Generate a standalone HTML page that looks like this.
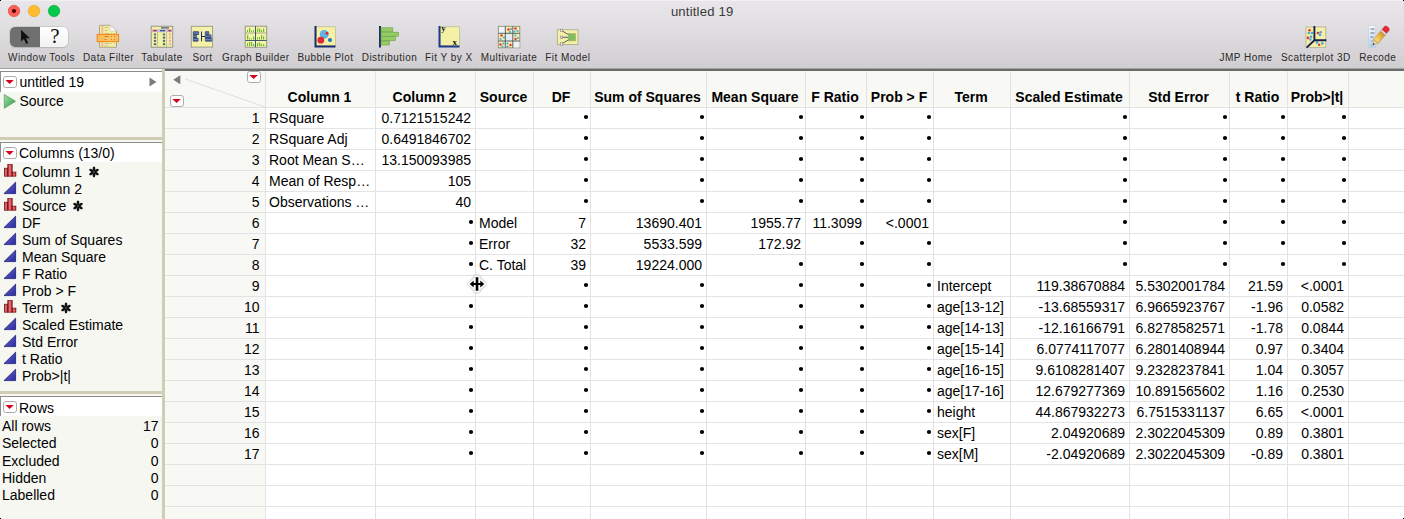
<!DOCTYPE html><html><head><meta charset="utf-8"><style>
html,body{margin:0;padding:0;}
body{width:1404px;height:519px;overflow:hidden;position:relative;background:#fff;font-family:"Liberation Sans",sans-serif;}
.t{position:absolute;white-space:nowrap;}
.r{position:absolute;}
</style></head><body>
<div class="r" style="left:0px;top:0px;width:1404px;height:69px;background:linear-gradient(#e8e6e8 0px,#e3e1e3 20px,#d9d7d9 45px,#d0ced0 68px);"></div>
<div class="r" style="left:0px;top:0px;width:1404px;height:1px;background:#f2f0f2;"></div>
<div class="r" style="left:0px;top:68px;width:1404px;height:1px;background:#a4a3a4;"></div>
<svg class="r" style="left:7px;top:4px" width="14" height="14" viewBox="0 0 14 14"><circle cx="7" cy="7" r="5.75" fill="#fd5f57" stroke="#e0443e" stroke-width="0.6"/></svg>
<svg class="r" style="left:27px;top:4px" width="14" height="14" viewBox="0 0 14 14"><circle cx="7" cy="7" r="5.75" fill="#febc2e" stroke="#dea123" stroke-width="0.6"/></svg>
<svg class="r" style="left:47px;top:4px" width="14" height="14" viewBox="0 0 14 14"><circle cx="7" cy="7" r="5.75" fill="#02c94c" stroke="#13a53a" stroke-width="0.6"/></svg>
<svg class="r" style="left:10px;top:7px" width="8" height="8" viewBox="0 0 8 8"><circle cx="4" cy="4" r="2.1" fill="#4d0000"/></svg>
<div class="t" style="left:402.20000000000005px;width:600px;text-align:center;top:4.81px;font-size:13.1px;line-height:13.1px;font-weight:normal;color:#3a3a3a;letter-spacing:0.2px;">untitled 19</div>
<div class="t" style="left:-258.5px;width:600px;text-align:center;top:53.14px;font-size:10px;line-height:10px;font-weight:normal;color:#2a2a2a;letter-spacing:0.45px;">Window Tools</div>
<div class="t" style="left:-191.5px;width:600px;text-align:center;top:53.14px;font-size:10px;line-height:10px;font-weight:normal;color:#2a2a2a;letter-spacing:0.45px;">Data Filter</div>
<div class="t" style="left:-138.0px;width:600px;text-align:center;top:53.14px;font-size:10px;line-height:10px;font-weight:normal;color:#2a2a2a;letter-spacing:0.45px;">Tabulate</div>
<div class="t" style="left:-97.5px;width:600px;text-align:center;top:53.14px;font-size:10px;line-height:10px;font-weight:normal;color:#2a2a2a;letter-spacing:0.45px;">Sort</div>
<div class="t" style="left:-44.19999999999999px;width:600px;text-align:center;top:53.14px;font-size:10px;line-height:10px;font-weight:normal;color:#2a2a2a;letter-spacing:0.45px;">Graph Builder</div>
<div class="t" style="left:25.5px;width:600px;text-align:center;top:53.14px;font-size:10px;line-height:10px;font-weight:normal;color:#2a2a2a;letter-spacing:0.45px;">Bubble Plot</div>
<div class="t" style="left:89.5px;width:600px;text-align:center;top:53.14px;font-size:10px;line-height:10px;font-weight:normal;color:#2a2a2a;letter-spacing:0.45px;">Distribution</div>
<div class="t" style="left:148.8px;width:600px;text-align:center;top:53.14px;font-size:10px;line-height:10px;font-weight:normal;color:#2a2a2a;letter-spacing:0.45px;">Fit Y by X</div>
<div class="t" style="left:209.0px;width:600px;text-align:center;top:53.14px;font-size:10px;line-height:10px;font-weight:normal;color:#2a2a2a;letter-spacing:0.45px;">Multivariate</div>
<div class="t" style="left:267.79999999999995px;width:600px;text-align:center;top:53.14px;font-size:10px;line-height:10px;font-weight:normal;color:#2a2a2a;letter-spacing:0.45px;">Fit Model</div>
<div class="t" style="left:946.0px;width:600px;text-align:center;top:53.14px;font-size:10px;line-height:10px;font-weight:normal;color:#2a2a2a;letter-spacing:0.45px;">JMP Home</div>
<div class="t" style="left:1015.8px;width:600px;text-align:center;top:53.14px;font-size:10px;line-height:10px;font-weight:normal;color:#2a2a2a;letter-spacing:0.45px;">Scatterplot 3D</div>
<div class="t" style="left:1077.8px;width:600px;text-align:center;top:53.14px;font-size:10px;line-height:10px;font-weight:normal;color:#2a2a2a;letter-spacing:0.45px;">Recode</div>
<div class="r" style="left:10px;top:27px;width:58px;height:20px;border-radius:5px;background:linear-gradient(#ffffff,#f2f2f2);box-shadow:0 0 0 0.5px #b9b9b9, 0 0.5px 1px rgba(0,0,0,0.15);"></div>
<div class="r" style="left:10px;top:27px;width:30px;height:20px;border-radius:5px 0 0 5px;background:#6f6f6f;"></div>
<svg class="r" style="left:20px;top:29px" width="12" height="16" viewBox="0 0 12 16"><path d="M1 0.8 L1 12.6 L3.9 10 L6.2 14.9 L8.2 14 L6 9.3 L9.9 9.3 Z" fill="#111"/></svg>
<div class="t" style="left:-245px;width:600px;text-align:center;top:26.42px;font-size:21px;line-height:21px;font-weight:normal;color:#111;font-family:'Liberation Serif',serif;">?</div>
<svg class="r" style="left:96px;top:24px" width="24" height="25" viewBox="0 0 24 25">
<path d="M3.5 1.3 H14.3 L20.5 7 V23.3 H3.5 Z" fill="#f3eea4" stroke="#9d9a7a" stroke-width="0.8"/>
<path d="M14.3 1.3 L14.3 7 L20.5 7 Z" fill="#fff" stroke="#c4c4c0" stroke-width="0.6"/>
<rect x="5.3" y="1.7" width="2" height="21.2" fill="#f4b8a0"/>
<g stroke="#b8b48a" stroke-width="0.8"><path d="M8.5 3.5h4M8.5 6.5h3M8.5 9.5h4.5M15 9.5h1M18 9.5h1M8.5 19.5h5M15 19.5h1M18 19.5h1M8.5 22h3"/></g>
<rect x="1.2" y="10.4" width="21.4" height="7.2" fill="#ffb850" fill-opacity="0.8" stroke="#f08a18" stroke-width="1.1"/>
<g stroke="#b07030" stroke-width="0.8"><path d="M8.5 12.5h4M15 12.5h1M18 12.5h1M8.5 15.5h2M15 15.5h1M18 15.5h1"/></g>
</svg>
<svg class="r" style="left:150px;top:25px" width="24" height="23" viewBox="0 0 24 23">
<rect x="1.2" y="1.2" width="21.5" height="21" fill="#f3f0a6" stroke="#8e8e80" stroke-width="0.9"/>
<rect x="1.6" y="4.2" width="20.8" height="3" fill="#f2a6a8"/>
<rect x="8.2" y="4.2" width="8.6" height="3" fill="#b8c8e4"/>
<rect x="11" y="2.2" width="8" height="1.3" fill="#4a5e88"/>
<rect x="3.5" y="5.1" width="3" height="1.2" fill="#3a4a80"/><rect x="10" y="5.1" width="5" height="1.2" fill="#3a4a80"/><rect x="18.5" y="5.1" width="2.5" height="1.2" fill="#3a4a80"/>
<path d="M7.5 7.3V22M16.5 7.3V22" stroke="#b8b496" stroke-width="0.9"/>
<g fill="#4a7078"><rect x="3.8" y="8.4" width="2.4" height="2.2" rx="0.8"/><rect x="3.8" y="11.6" width="2.4" height="2.2" rx="0.8"/><rect x="3.8" y="14.8" width="2.4" height="2.2" rx="0.8"/><rect x="3.8" y="18" width="2.4" height="2.2" rx="0.8"/>
<rect x="12.8" y="8.4" width="2.4" height="2.2" rx="0.8"/><rect x="12.8" y="11.6" width="2.4" height="2.2" rx="0.8"/><rect x="12.8" y="14.8" width="2.4" height="2.2" rx="0.8"/><rect x="12.8" y="18" width="2.4" height="2.2" rx="0.8"/></g>
<g fill="#f4a8ac"><rect x="18.8" y="8.4" width="2.2" height="2.2" rx="0.8"/><rect x="18.8" y="11.6" width="2.2" height="2.2" rx="0.8"/><rect x="18.8" y="14.8" width="2.2" height="2.2" rx="0.8"/><rect x="18.8" y="18" width="2.2" height="2.2" rx="0.8"/></g>
</svg>
<svg class="r" style="left:190px;top:25px" width="24" height="23" viewBox="0 0 24 23">
<defs><linearGradient id="sg" x1="0" y1="0" x2="0" y2="1"><stop offset="0" stop-color="#34508e"/><stop offset="0.5" stop-color="#6f88c0"/><stop offset="1" stop-color="#22366c"/></linearGradient></defs>
<rect x="1.3" y="1.3" width="21.3" height="20.8" fill="#f4f0a8" stroke="#9a9880" stroke-width="0.9"/>
<g fill="url(#sg)" stroke="#26386c" stroke-width="0.5">
<rect x="3.1" y="6.6" width="5.6" height="3.1" rx="0.6"/><rect x="3.1" y="9.8" width="3.4" height="3.1" rx="0.6"/><rect x="3.1" y="13" width="5.1" height="3.3" rx="0.6"/>
<rect x="15.2" y="6.6" width="3.7" height="3.1" rx="0.6"/><rect x="15.2" y="9.8" width="6" height="3.1" rx="0.6"/><rect x="15.2" y="13" width="6.6" height="3.3" rx="0.6"/></g>
<path d="M11.5 6.6V16.3M11.5 11.5H15.2" stroke="#1e2c56" stroke-width="1"/>
</svg>
<svg class="r" style="left:244px;top:25px" width="24" height="23" viewBox="0 0 24 23">
<rect x="1.2" y="1.2" width="21.5" height="21" fill="#f4f4a4" stroke="#8e9080" stroke-width="0.9"/>
<g fill="#6cb840">
<rect x="3" y="5" width="1" height="2"/><rect x="5" y="3" width="1.2" height="4"/><rect x="7" y="5.5" width="1" height="1.5"/><rect x="9" y="5" width="1" height="2"/>
<rect x="13" y="3.5" width="1.2" height="3.5"/><rect x="15" y="3.5" width="1.2" height="3.5"/><rect x="17" y="5" width="1" height="2"/><rect x="19" y="3.5" width="1.2" height="3.5"/>
<rect x="3" y="10" width="1.2" height="4.5"/><rect x="5" y="13" width="1" height="1.5"/><rect x="7" y="13.5" width="1" height="1"/><rect x="9" y="11.5" width="1.2" height="3"/>
<rect x="13" y="12.5" width="1" height="2"/><rect x="15" y="12" width="1" height="2.5"/><rect x="17" y="10" width="1.2" height="4.5"/><rect x="19" y="11.5" width="1.2" height="3"/>
<rect x="3" y="18" width="1" height="3"/><rect x="5" y="17" width="1.2" height="4"/><rect x="7" y="17" width="1.2" height="4"/><rect x="9" y="19" width="1.2" height="2"/>
<rect x="13" y="18" width="1.2" height="3"/><rect x="15" y="17.5" width="1.2" height="3.5"/><rect x="17" y="19" width="1" height="2"/><rect x="19" y="19" width="1.2" height="2"/></g>
<path d="M1.5 8H22.5" stroke="#9aa08a" stroke-width="0.9"/>
<path d="M1.5 15.5H22.5M11.5 1.2V22.2" stroke="#2e4a6a" stroke-width="0.9"/>
</svg>
<svg class="r" style="left:313px;top:25px" width="24" height="24" viewBox="0 0 24 24">
<rect x="3" y="1.8" width="19.5" height="19" fill="#f4f0a6" stroke="#b0ae90" stroke-width="0.6"/>
<path d="M2.5 1V21.5H22.5" fill="none" stroke="#1e2e6a" stroke-width="2"/>
<circle cx="11.2" cy="9.4" r="4.4" fill="#62b2e6"/>
<circle cx="14" cy="8.2" r="1.5" fill="#dd2a34"/>
<circle cx="7.8" cy="15.2" r="3.4" fill="#dd2a34"/>
<circle cx="17" cy="15" r="2.1" fill="#1e78c8"/>
</svg>
<svg class="r" style="left:378px;top:25px" width="24" height="24" viewBox="0 0 24 24">
<path d="M2 1V22.5" stroke="#1e2e6a" stroke-width="2"/>
<g fill="#92cc62" stroke="#6e9e48" stroke-width="0.6">
<rect x="3" y="2.8" width="11.8" height="4"/><rect x="3" y="7.2" width="17.5" height="4"/><rect x="3" y="11.6" width="14.3" height="4"/><rect x="3" y="16" width="8.5" height="4"/></g>
</svg>
<svg class="r" style="left:437px;top:25px" width="24" height="24" viewBox="0 0 24 24">
<rect x="3" y="1.8" width="19.5" height="19" fill="#f4f0a6" stroke="#b0ae90" stroke-width="0.6"/>
<path d="M2.5 1V21.5H22.5" fill="none" stroke="#1e3a8a" stroke-width="2"/>
<text x="4.3" y="6.3" font-family="Liberation Serif" font-weight="bold" font-size="9" fill="#111">y</text>
<text x="15.6" y="19.6" font-family="Liberation Serif" font-weight="bold" font-size="9" fill="#111">x</text>
</svg>
<svg class="r" style="left:497px;top:25px" width="24" height="24" viewBox="0 0 24 24">
<rect x="1.3" y="1.3" width="21.5" height="21.5" fill="#f4f0a6" stroke="#8e9080" stroke-width="0.9"/>
<rect x="2" y="2" width="6" height="6" fill="#f2f4fc"/><rect x="9" y="9.5" width="6.5" height="6.5" fill="#e4eaf8"/><rect x="16.5" y="16.5" width="6" height="6" fill="#eef0fa"/>
<path d="M8.3 1.3V22.8M15.8 1.3V22.8M1.3 8.3H22.8M1.3 16H22.8" stroke="#3e5670" stroke-width="0.9"/>
<g fill="#e0343c"><circle cx="11.5" cy="4.5" r="1.2"/><circle cx="18.5" cy="3.5" r="1.2"/><circle cx="4.5" cy="10.5" r="1.2"/><circle cx="18.5" cy="14" r="1.2"/><circle cx="3.5" cy="19.5" r="1.2"/><circle cx="13.5" cy="20" r="1.2"/></g>
<g fill="#4ea6e0"><circle cx="14" cy="4" r="1.1"/><circle cx="13" cy="7" r="1.1"/><circle cx="17.5" cy="6.5" r="1.1"/><circle cx="20.5" cy="6" r="1.1"/><circle cx="3.5" cy="14" r="1.1"/><circle cx="7" cy="12.5" r="1.1"/><circle cx="18.5" cy="10.5" r="1.1"/><circle cx="21" cy="13" r="1.1"/><circle cx="6.5" cy="18.5" r="1.1"/><circle cx="5.5" cy="21.5" r="1.1"/><circle cx="10.5" cy="18.5" r="1.1"/><circle cx="10.5" cy="21.5" r="1.1"/></g>
</svg>
<svg class="r" style="left:556px;top:28px" width="24" height="19" viewBox="0 0 24 19">
<rect x="1.3" y="1.8" width="20.7" height="14.8" fill="#f4f0a6" stroke="#a8a690" stroke-width="0.8"/>
<path d="M5.5 2.5L13 7M5.5 9.3H13M5.5 16L13 11.5" stroke="#34506a" stroke-width="0.9"/>
<rect x="12.7" y="5.6" width="6.8" height="7.3" fill="#7cc060" stroke="#b89a60" stroke-width="0.5"/>
<g fill="#f0f0ff" stroke="#9a8060" stroke-width="0.6"><rect x="4.3" y="1.2" width="2.4" height="2.4"/><rect x="4.3" y="8.1" width="2.4" height="2.4"/><rect x="4.3" y="14.8" width="2.4" height="2.4"/></g>
</svg>
<svg class="r" style="left:1305px;top:25px" width="24" height="24" viewBox="0 0 24 24">
<rect x="1" y="2" width="19.8" height="20.3" fill="#f4f0a6" stroke="#a8a690" stroke-width="0.7"/>
<g fill="#e0343c"><circle cx="4.5" cy="5.2" r="1.3"/><circle cx="3" cy="12.9" r="1.3"/><circle cx="13" cy="8" r="1.3"/><circle cx="14.1" cy="19.8" r="1.3"/></g>
<g fill="#4ea6e0"><circle cx="3.9" cy="8" r="1.3"/><circle cx="7" cy="8" r="1.3"/><circle cx="6" cy="11.7" r="1.3"/><circle cx="5.3" cy="14.5" r="1.3"/><circle cx="15.7" cy="7.2" r="1.3"/><circle cx="15" cy="10" r="1.3"/><circle cx="12" cy="17.4" r="1.3"/><circle cx="17.4" cy="18.4" r="1.3"/></g>
<path d="M9.4 1V15.2H21.4M9.4 15.2L1.6 22.6" fill="none" stroke="#16244e" stroke-width="1.9"/>
</svg>
<svg class="r" style="left:1366px;top:24px" width="25" height="25" viewBox="0 0 25 25">
<defs><linearGradient id="rg" x1="0" y1="0" x2="0" y2="1"><stop offset="0" stop-color="#f4f8fc"/><stop offset="1" stop-color="#b4d4f2"/></linearGradient>
<linearGradient id="pg" x1="0" y1="1" x2="1" y2="0"><stop offset="0" stop-color="#fde890"/><stop offset="0.5" stop-color="#eebc48"/><stop offset="1" stop-color="#b08020"/></linearGradient></defs>
<rect x="2.3" y="1.5" width="7.5" height="22" fill="url(#rg)" stroke="#c4ccd4" stroke-width="0.6"/>
<g stroke="#5a6570" stroke-width="0.9"><path d="M4.5 5h4M4.5 9h4M4.5 13h3"/></g>
<g stroke="#8a95a0" stroke-width="0.8"><path d="M4.5 17h3M4.5 21h3"/></g>
<path d="M7 20.8 L12.2 19.3 L7.6 15.4 Z" fill="#ecd4a4" stroke="#b09060" stroke-width="0.4"/>
<path d="M7 20.8 L8.9 20.2 L7.3 18.8 Z" fill="#222"/>
<path d="M7.6 15.4 L12.2 19.3 L19.3 10.9 L14.7 7 Z" fill="url(#pg)" stroke="#a87a20" stroke-width="0.5"/>
<path d="M14.7 7 L19.3 10.9 L20.6 9.35 L16 5.5 Z" fill="#dcdcdc" stroke="#909090" stroke-width="0.4"/>
<path d="M16 5.5 L20.6 9.35 L23 6.5 Q24 5.2 22.6 3.8 L20.8 2.3 Q19.4 1.4 18.4 2.6 Z" fill="#e42838" stroke="#b81828" stroke-width="0.4"/>
</svg>
<div class="r" style="left:0px;top:69px;width:162px;height:450px;background:#f7f7f2;"></div>
<div class="r" style="left:162px;top:69px;width:3px;height:450px;background:#cfcdb6;"></div>
<div class="r" style="left:0px;top:69px;width:162px;height:2px;background:#fbfbf9;"></div>
<div class="r" style="left:0px;top:71px;width:162px;height:21px;background:#fff;"></div>
<div class="r" style="left:0px;top:71px;width:162px;height:1px;background:#8c8c8c;"></div>
<div class="r" style="left:0px;top:71px;width:1px;height:21px;background:#8c8c8c;"></div>
<svg class="r" style="left:2px;top:75px" width="16" height="14" viewBox="0 0 16 14"><rect x="1.5" y="1.5" width="13" height="11" rx="2.3" fill="#fff" stroke="#acacac" stroke-width="1"/><path d="M3.4 5 H11.8 L7.6 9.1 Z" fill="#d6001a"/></svg>
<div class="t" style="left:19.5px;top:74.95px;font-size:14px;line-height:14px;font-weight:normal;color:#000;">untitled 19</div>
<svg class="r" style="left:148px;top:76px" width="10" height="12" viewBox="0 0 10 12"><path d="M1.5 1.5 L8.5 6 L1.5 10.5 Z" fill="#7b7b7b"/></svg>
<svg class="r" style="left:3px;top:93px" width="14" height="17" viewBox="0 0 14 17"><defs><linearGradient id="gg" x1="0" y1="0" x2="1" y2="1"><stop offset="0" stop-color="#9ee0a8"/><stop offset="1" stop-color="#2f9a48"/></linearGradient></defs><path d="M1.3 1.5 L12.5 8.3 L1.3 15.3 Z" fill="url(#gg)" stroke="#3a8a4a" stroke-width="0.6"/></svg>
<div class="t" style="left:19.5px;top:94.15px;font-size:14px;line-height:14px;font-weight:normal;color:#000;">Source</div>
<div class="r" style="left:0px;top:137px;width:162px;height:3px;background:#cfcdb6;"></div>
<div class="r" style="left:0px;top:142px;width:162px;height:20px;background:#fff;"></div>
<div class="r" style="left:0px;top:142px;width:162px;height:1px;background:#8c8c8c;"></div>
<div class="r" style="left:0px;top:142px;width:1px;height:20px;background:#8c8c8c;"></div>
<svg class="r" style="left:2px;top:146px" width="16" height="14" viewBox="0 0 16 14"><rect x="1.5" y="1.5" width="13" height="11" rx="2.3" fill="#fff" stroke="#acacac" stroke-width="1"/><path d="M3.4 5 H11.8 L7.6 9.1 Z" fill="#d6001a"/></svg>
<div class="t" style="left:19px;top:146.15px;font-size:14px;line-height:14px;font-weight:normal;color:#000;">Columns (13/0)</div>
<svg class="r" style="left:3px;top:164.3px" width="14" height="14" viewBox="0 0 14 14"><defs><linearGradient id="ng" x1="0" y1="0" x2="1" y2="0"><stop offset="0" stop-color="#9a1018"/><stop offset="0.45" stop-color="#e8868a"/><stop offset="1" stop-color="#a8141c"/></linearGradient></defs><g stroke="#7a0a10" stroke-width="0.7" fill="url(#ng)"><rect x="1.4" y="4.2" width="3.4" height="8"/><rect x="4.8" y="0.6" width="4.4" height="11.6"/><rect x="9.2" y="8.1" width="3.7" height="4.1"/></g></svg>
<div class="t" style="left:22px;top:164.95px;font-size:14px;line-height:14px;font-weight:normal;color:#000;">Column 1</div>
<svg class="r" style="left:87.9px;top:165.60000000000002px" width="12" height="12" viewBox="0 0 12 12"><g transform="translate(6,6)" fill="#111"><circle r="1"/><ellipse cx="0" cy="-3.1" rx="1.35" ry="2.3" transform="rotate(0)"/><ellipse cx="0" cy="-3.1" rx="1.35" ry="2.3" transform="rotate(60)"/><ellipse cx="0" cy="-3.1" rx="1.35" ry="2.3" transform="rotate(120)"/><ellipse cx="0" cy="-3.1" rx="1.35" ry="2.3" transform="rotate(180)"/><ellipse cx="0" cy="-3.1" rx="1.35" ry="2.3" transform="rotate(240)"/><ellipse cx="0" cy="-3.1" rx="1.35" ry="2.3" transform="rotate(300)"/></g></svg>
<svg class="r" style="left:3px;top:181.3px" width="14" height="14" viewBox="0 0 14 14"><defs><linearGradient id="cg" x1="0" y1="0" x2="1" y2="1"><stop offset="0" stop-color="#6a6ad8"/><stop offset="1" stop-color="#2a2a9a"/></linearGradient></defs><path d="M1 12.6 L12.6 1.2 V12.6 Z" fill="url(#cg)" stroke="#1e1e78" stroke-width="0.8"/></svg>
<div class="t" style="left:22px;top:181.95px;font-size:14px;line-height:14px;font-weight:normal;color:#000;">Column 2</div>
<svg class="r" style="left:3px;top:198.3px" width="14" height="14" viewBox="0 0 14 14"><defs><linearGradient id="ng" x1="0" y1="0" x2="1" y2="0"><stop offset="0" stop-color="#9a1018"/><stop offset="0.45" stop-color="#e8868a"/><stop offset="1" stop-color="#a8141c"/></linearGradient></defs><g stroke="#7a0a10" stroke-width="0.7" fill="url(#ng)"><rect x="1.4" y="4.2" width="3.4" height="8"/><rect x="4.8" y="0.6" width="4.4" height="11.6"/><rect x="9.2" y="8.1" width="3.7" height="4.1"/></g></svg>
<div class="t" style="left:22px;top:198.95px;font-size:14px;line-height:14px;font-weight:normal;color:#000;">Source</div>
<svg class="r" style="left:72.4px;top:199.60000000000002px" width="12" height="12" viewBox="0 0 12 12"><g transform="translate(6,6)" fill="#111"><circle r="1"/><ellipse cx="0" cy="-3.1" rx="1.35" ry="2.3" transform="rotate(0)"/><ellipse cx="0" cy="-3.1" rx="1.35" ry="2.3" transform="rotate(60)"/><ellipse cx="0" cy="-3.1" rx="1.35" ry="2.3" transform="rotate(120)"/><ellipse cx="0" cy="-3.1" rx="1.35" ry="2.3" transform="rotate(180)"/><ellipse cx="0" cy="-3.1" rx="1.35" ry="2.3" transform="rotate(240)"/><ellipse cx="0" cy="-3.1" rx="1.35" ry="2.3" transform="rotate(300)"/></g></svg>
<svg class="r" style="left:3px;top:215.3px" width="14" height="14" viewBox="0 0 14 14"><defs><linearGradient id="cg" x1="0" y1="0" x2="1" y2="1"><stop offset="0" stop-color="#6a6ad8"/><stop offset="1" stop-color="#2a2a9a"/></linearGradient></defs><path d="M1 12.6 L12.6 1.2 V12.6 Z" fill="url(#cg)" stroke="#1e1e78" stroke-width="0.8"/></svg>
<div class="t" style="left:22px;top:215.95px;font-size:14px;line-height:14px;font-weight:normal;color:#000;">DF</div>
<svg class="r" style="left:3px;top:232.3px" width="14" height="14" viewBox="0 0 14 14"><defs><linearGradient id="cg" x1="0" y1="0" x2="1" y2="1"><stop offset="0" stop-color="#6a6ad8"/><stop offset="1" stop-color="#2a2a9a"/></linearGradient></defs><path d="M1 12.6 L12.6 1.2 V12.6 Z" fill="url(#cg)" stroke="#1e1e78" stroke-width="0.8"/></svg>
<div class="t" style="left:22px;top:232.95px;font-size:14px;line-height:14px;font-weight:normal;color:#000;">Sum of Squares</div>
<svg class="r" style="left:3px;top:249.3px" width="14" height="14" viewBox="0 0 14 14"><defs><linearGradient id="cg" x1="0" y1="0" x2="1" y2="1"><stop offset="0" stop-color="#6a6ad8"/><stop offset="1" stop-color="#2a2a9a"/></linearGradient></defs><path d="M1 12.6 L12.6 1.2 V12.6 Z" fill="url(#cg)" stroke="#1e1e78" stroke-width="0.8"/></svg>
<div class="t" style="left:22px;top:249.95px;font-size:14px;line-height:14px;font-weight:normal;color:#000;">Mean Square</div>
<svg class="r" style="left:3px;top:266.3px" width="14" height="14" viewBox="0 0 14 14"><defs><linearGradient id="cg" x1="0" y1="0" x2="1" y2="1"><stop offset="0" stop-color="#6a6ad8"/><stop offset="1" stop-color="#2a2a9a"/></linearGradient></defs><path d="M1 12.6 L12.6 1.2 V12.6 Z" fill="url(#cg)" stroke="#1e1e78" stroke-width="0.8"/></svg>
<div class="t" style="left:22px;top:266.95px;font-size:14px;line-height:14px;font-weight:normal;color:#000;">F Ratio</div>
<svg class="r" style="left:3px;top:283.3px" width="14" height="14" viewBox="0 0 14 14"><defs><linearGradient id="cg" x1="0" y1="0" x2="1" y2="1"><stop offset="0" stop-color="#6a6ad8"/><stop offset="1" stop-color="#2a2a9a"/></linearGradient></defs><path d="M1 12.6 L12.6 1.2 V12.6 Z" fill="url(#cg)" stroke="#1e1e78" stroke-width="0.8"/></svg>
<div class="t" style="left:22px;top:283.95px;font-size:14px;line-height:14px;font-weight:normal;color:#000;">Prob &gt; F</div>
<svg class="r" style="left:3px;top:300.3px" width="14" height="14" viewBox="0 0 14 14"><defs><linearGradient id="ng" x1="0" y1="0" x2="1" y2="0"><stop offset="0" stop-color="#9a1018"/><stop offset="0.45" stop-color="#e8868a"/><stop offset="1" stop-color="#a8141c"/></linearGradient></defs><g stroke="#7a0a10" stroke-width="0.7" fill="url(#ng)"><rect x="1.4" y="4.2" width="3.4" height="8"/><rect x="4.8" y="0.6" width="4.4" height="11.6"/><rect x="9.2" y="8.1" width="3.7" height="4.1"/></g></svg>
<div class="t" style="left:22px;top:300.95px;font-size:14px;line-height:14px;font-weight:normal;color:#000;">Term</div>
<svg class="r" style="left:59.900000000000006px;top:301.6px" width="12" height="12" viewBox="0 0 12 12"><g transform="translate(6,6)" fill="#111"><circle r="1"/><ellipse cx="0" cy="-3.1" rx="1.35" ry="2.3" transform="rotate(0)"/><ellipse cx="0" cy="-3.1" rx="1.35" ry="2.3" transform="rotate(60)"/><ellipse cx="0" cy="-3.1" rx="1.35" ry="2.3" transform="rotate(120)"/><ellipse cx="0" cy="-3.1" rx="1.35" ry="2.3" transform="rotate(180)"/><ellipse cx="0" cy="-3.1" rx="1.35" ry="2.3" transform="rotate(240)"/><ellipse cx="0" cy="-3.1" rx="1.35" ry="2.3" transform="rotate(300)"/></g></svg>
<svg class="r" style="left:3px;top:317.3px" width="14" height="14" viewBox="0 0 14 14"><defs><linearGradient id="cg" x1="0" y1="0" x2="1" y2="1"><stop offset="0" stop-color="#6a6ad8"/><stop offset="1" stop-color="#2a2a9a"/></linearGradient></defs><path d="M1 12.6 L12.6 1.2 V12.6 Z" fill="url(#cg)" stroke="#1e1e78" stroke-width="0.8"/></svg>
<div class="t" style="left:22px;top:317.95px;font-size:14px;line-height:14px;font-weight:normal;color:#000;">Scaled Estimate</div>
<svg class="r" style="left:3px;top:334.3px" width="14" height="14" viewBox="0 0 14 14"><defs><linearGradient id="cg" x1="0" y1="0" x2="1" y2="1"><stop offset="0" stop-color="#6a6ad8"/><stop offset="1" stop-color="#2a2a9a"/></linearGradient></defs><path d="M1 12.6 L12.6 1.2 V12.6 Z" fill="url(#cg)" stroke="#1e1e78" stroke-width="0.8"/></svg>
<div class="t" style="left:22px;top:334.95px;font-size:14px;line-height:14px;font-weight:normal;color:#000;">Std Error</div>
<svg class="r" style="left:3px;top:351.3px" width="14" height="14" viewBox="0 0 14 14"><defs><linearGradient id="cg" x1="0" y1="0" x2="1" y2="1"><stop offset="0" stop-color="#6a6ad8"/><stop offset="1" stop-color="#2a2a9a"/></linearGradient></defs><path d="M1 12.6 L12.6 1.2 V12.6 Z" fill="url(#cg)" stroke="#1e1e78" stroke-width="0.8"/></svg>
<div class="t" style="left:22px;top:351.95px;font-size:14px;line-height:14px;font-weight:normal;color:#000;">t Ratio</div>
<svg class="r" style="left:3px;top:368.3px" width="14" height="14" viewBox="0 0 14 14"><defs><linearGradient id="cg" x1="0" y1="0" x2="1" y2="1"><stop offset="0" stop-color="#6a6ad8"/><stop offset="1" stop-color="#2a2a9a"/></linearGradient></defs><path d="M1 12.6 L12.6 1.2 V12.6 Z" fill="url(#cg)" stroke="#1e1e78" stroke-width="0.8"/></svg>
<div class="t" style="left:22px;top:368.95px;font-size:14px;line-height:14px;font-weight:normal;color:#000;">Prob&gt;|t|</div>
<div class="r" style="left:0px;top:391px;width:162px;height:3px;background:#cfcdb6;"></div>
<div class="r" style="left:0px;top:396px;width:162px;height:20px;background:#fff;"></div>
<div class="r" style="left:0px;top:396px;width:162px;height:1px;background:#8c8c8c;"></div>
<div class="r" style="left:0px;top:396px;width:1px;height:20px;background:#8c8c8c;"></div>
<svg class="r" style="left:2px;top:400px" width="16" height="14" viewBox="0 0 16 14"><rect x="1.5" y="1.5" width="13" height="11" rx="2.3" fill="#fff" stroke="#acacac" stroke-width="1"/><path d="M3.4 5 H11.8 L7.6 9.1 Z" fill="#d6001a"/></svg>
<div class="t" style="left:19px;top:400.75px;font-size:14px;line-height:14px;font-weight:normal;color:#000;">Rows</div>
<div class="t" style="left:2px;top:419.35px;font-size:14px;line-height:14px;font-weight:normal;color:#000;">All rows</div>
<div class="t" style="left:-441.5px;width:600px;text-align:right;top:419.35px;font-size:14px;line-height:14px;font-weight:normal;color:#000;">17</div>
<div class="t" style="left:2px;top:436.43px;font-size:14px;line-height:14px;font-weight:normal;color:#000;">Selected</div>
<div class="t" style="left:-441.5px;width:600px;text-align:right;top:436.43px;font-size:14px;line-height:14px;font-weight:normal;color:#000;">0</div>
<div class="t" style="left:2px;top:453.51px;font-size:14px;line-height:14px;font-weight:normal;color:#000;">Excluded</div>
<div class="t" style="left:-441.5px;width:600px;text-align:right;top:453.51px;font-size:14px;line-height:14px;font-weight:normal;color:#000;">0</div>
<div class="t" style="left:2px;top:470.59px;font-size:14px;line-height:14px;font-weight:normal;color:#000;">Hidden</div>
<div class="t" style="left:-441.5px;width:600px;text-align:right;top:470.59px;font-size:14px;line-height:14px;font-weight:normal;color:#000;">0</div>
<div class="t" style="left:2px;top:487.67px;font-size:14px;line-height:14px;font-weight:normal;color:#000;">Labelled</div>
<div class="t" style="left:-441.5px;width:600px;text-align:right;top:487.67px;font-size:14px;line-height:14px;font-weight:normal;color:#000;">0</div>
<div class="r" style="left:165px;top:69px;width:1239px;height:2px;background:#6b6b6b;"></div>
<div class="r" style="left:165px;top:71px;width:1239px;height:448px;background:#fff;"></div>
<div class="r" style="left:165px;top:71px;width:1239px;height:36px;background:#f8f8f4;"></div>
<div class="r" style="left:165px;top:71px;width:100px;height:448px;background:#f8f8f4;"></div>
<div class="r" style="left:165px;top:107px;width:1239px;height:1px;background:#e3e3e3;"></div>
<div class="r" style="left:165px;top:128px;width:1239px;height:1px;background:#e3e3e3;"></div>
<div class="r" style="left:165px;top:149px;width:1239px;height:1px;background:#e3e3e3;"></div>
<div class="r" style="left:165px;top:170px;width:1239px;height:1px;background:#e3e3e3;"></div>
<div class="r" style="left:165px;top:191px;width:1239px;height:1px;background:#e3e3e3;"></div>
<div class="r" style="left:165px;top:212px;width:1239px;height:1px;background:#e3e3e3;"></div>
<div class="r" style="left:165px;top:233px;width:1239px;height:1px;background:#e3e3e3;"></div>
<div class="r" style="left:165px;top:254px;width:1239px;height:1px;background:#e3e3e3;"></div>
<div class="r" style="left:165px;top:275px;width:1239px;height:1px;background:#e3e3e3;"></div>
<div class="r" style="left:165px;top:296px;width:1239px;height:1px;background:#e3e3e3;"></div>
<div class="r" style="left:165px;top:317px;width:1239px;height:1px;background:#e3e3e3;"></div>
<div class="r" style="left:165px;top:338px;width:1239px;height:1px;background:#e3e3e3;"></div>
<div class="r" style="left:165px;top:359px;width:1239px;height:1px;background:#e3e3e3;"></div>
<div class="r" style="left:165px;top:380px;width:1239px;height:1px;background:#e3e3e3;"></div>
<div class="r" style="left:165px;top:401px;width:1239px;height:1px;background:#e3e3e3;"></div>
<div class="r" style="left:165px;top:422px;width:1239px;height:1px;background:#e3e3e3;"></div>
<div class="r" style="left:165px;top:443px;width:1239px;height:1px;background:#e3e3e3;"></div>
<div class="r" style="left:165px;top:464px;width:1239px;height:1px;background:#e3e3e3;"></div>
<div class="r" style="left:165px;top:485px;width:1239px;height:1px;background:#e3e3e3;"></div>
<div class="r" style="left:165px;top:506px;width:1239px;height:1px;background:#e3e3e3;"></div>
<div class="r" style="left:265px;top:71px;width:1px;height:448px;background:#e3e3e3;"></div>
<div class="r" style="left:375px;top:71px;width:1px;height:448px;background:#e3e3e3;"></div>
<div class="r" style="left:475px;top:71px;width:1px;height:448px;background:#e3e3e3;"></div>
<div class="r" style="left:533px;top:71px;width:1px;height:448px;background:#e3e3e3;"></div>
<div class="r" style="left:590px;top:71px;width:1px;height:448px;background:#e3e3e3;"></div>
<div class="r" style="left:706px;top:71px;width:1px;height:448px;background:#e3e3e3;"></div>
<div class="r" style="left:805px;top:71px;width:1px;height:448px;background:#e3e3e3;"></div>
<div class="r" style="left:866px;top:71px;width:1px;height:448px;background:#e3e3e3;"></div>
<div class="r" style="left:933px;top:71px;width:1px;height:448px;background:#e3e3e3;"></div>
<div class="r" style="left:1010px;top:71px;width:1px;height:448px;background:#e3e3e3;"></div>
<div class="r" style="left:1129px;top:71px;width:1px;height:448px;background:#e3e3e3;"></div>
<div class="r" style="left:1229px;top:71px;width:1px;height:448px;background:#e3e3e3;"></div>
<div class="r" style="left:1287px;top:71px;width:1px;height:448px;background:#e3e3e3;"></div>
<div class="r" style="left:1348px;top:71px;width:1px;height:448px;background:#e3e3e3;"></div>
<svg class="r" style="left:172px;top:74px" width="10" height="12" viewBox="0 0 10 12"><path d="M8.3 1.2 V10.3 L1.2 5.75 Z" fill="#7b7b7b"/></svg>
<svg class="r" style="left:165px;top:71px" width="101" height="37"><line x1="20" y1="8" x2="100" y2="36" stroke="#d8d8d8" stroke-width="0.8"/></svg>
<svg class="r" style="left:246px;top:70px" width="16" height="14" viewBox="0 0 16 14"><rect x="1.5" y="1.5" width="13" height="11" rx="2.3" fill="#fff" stroke="#acacac" stroke-width="1"/><path d="M3.4 5 H11.8 L7.6 9.1 Z" fill="#d6001a"/></svg>
<svg class="r" style="left:169px;top:94px" width="16" height="14" viewBox="0 0 16 14"><rect x="1.5" y="1.5" width="13" height="11" rx="2.3" fill="#fff" stroke="#acacac" stroke-width="1"/><path d="M3.4 5 H11.8 L7.6 9.1 Z" fill="#d6001a"/></svg>
<div class="t" style="left:19.5px;width:600px;text-align:center;top:89.95px;font-size:14px;line-height:14px;font-weight:bold;color:#000;">Column 1</div>
<div class="t" style="left:124.5px;width:600px;text-align:center;top:89.95px;font-size:14px;line-height:14px;font-weight:bold;color:#000;">Column 2</div>
<div class="t" style="left:203.5px;width:600px;text-align:center;top:89.95px;font-size:14px;line-height:14px;font-weight:bold;color:#000;">Source</div>
<div class="t" style="left:261.0px;width:600px;text-align:center;top:89.95px;font-size:14px;line-height:14px;font-weight:bold;color:#000;">DF</div>
<div class="t" style="left:347.5px;width:600px;text-align:center;top:89.95px;font-size:14px;line-height:14px;font-weight:bold;color:#000;">Sum of Squares</div>
<div class="t" style="left:455.0px;width:600px;text-align:center;top:89.95px;font-size:14px;line-height:14px;font-weight:bold;color:#000;">Mean Square</div>
<div class="t" style="left:535.0px;width:600px;text-align:center;top:89.95px;font-size:14px;line-height:14px;font-weight:bold;color:#000;">F Ratio</div>
<div class="t" style="left:599.0px;width:600px;text-align:center;top:89.95px;font-size:14px;line-height:14px;font-weight:bold;color:#000;">Prob &gt; F</div>
<div class="t" style="left:671.0px;width:600px;text-align:center;top:89.95px;font-size:14px;line-height:14px;font-weight:bold;color:#000;">Term</div>
<div class="t" style="left:769.0px;width:600px;text-align:center;top:89.95px;font-size:14px;line-height:14px;font-weight:bold;color:#000;">Scaled Estimate</div>
<div class="t" style="left:878.5px;width:600px;text-align:center;top:89.95px;font-size:14px;line-height:14px;font-weight:bold;color:#000;">Std Error</div>
<div class="t" style="left:957.5px;width:600px;text-align:center;top:89.95px;font-size:14px;line-height:14px;font-weight:bold;color:#000;">t Ratio</div>
<div class="t" style="left:1017.0px;width:600px;text-align:center;top:89.95px;font-size:14px;line-height:14px;font-weight:bold;color:#000;">Prob&gt;|t|</div>
<div class="t" style="left:-340.5px;width:600px;text-align:right;top:111.05px;font-size:14px;line-height:14px;font-weight:normal;color:#000;">1</div>
<div class="t" style="left:269px;top:111.05px;font-size:14px;line-height:14px;font-weight:normal;color:#000;">RSquare</div>
<div class="t" style="left:-129px;width:600px;text-align:right;top:111.05px;font-size:14px;line-height:14px;font-weight:normal;color:#000;">0.7121515242</div>
<div class="t" style="left:-340.5px;width:600px;text-align:right;top:132.05px;font-size:14px;line-height:14px;font-weight:normal;color:#000;">2</div>
<div class="t" style="left:269px;top:132.05px;font-size:14px;line-height:14px;font-weight:normal;color:#000;">RSquare Adj</div>
<div class="t" style="left:-129px;width:600px;text-align:right;top:132.05px;font-size:14px;line-height:14px;font-weight:normal;color:#000;">0.6491846702</div>
<div class="t" style="left:-340.5px;width:600px;text-align:right;top:153.05px;font-size:14px;line-height:14px;font-weight:normal;color:#000;">3</div>
<div class="t" style="left:269px;top:153.05px;font-size:14px;line-height:14px;font-weight:normal;color:#000;">Root Mean S…</div>
<div class="t" style="left:-129px;width:600px;text-align:right;top:153.05px;font-size:14px;line-height:14px;font-weight:normal;color:#000;">13.150093985</div>
<div class="t" style="left:-340.5px;width:600px;text-align:right;top:174.05px;font-size:14px;line-height:14px;font-weight:normal;color:#000;">4</div>
<div class="t" style="left:269px;top:174.05px;font-size:14px;line-height:14px;font-weight:normal;color:#000;">Mean of Resp…</div>
<div class="t" style="left:-129px;width:600px;text-align:right;top:174.05px;font-size:14px;line-height:14px;font-weight:normal;color:#000;">105</div>
<div class="t" style="left:-340.5px;width:600px;text-align:right;top:195.05px;font-size:14px;line-height:14px;font-weight:normal;color:#000;">5</div>
<div class="t" style="left:269px;top:195.05px;font-size:14px;line-height:14px;font-weight:normal;color:#000;">Observations …</div>
<div class="t" style="left:-129px;width:600px;text-align:right;top:195.05px;font-size:14px;line-height:14px;font-weight:normal;color:#000;">40</div>
<div class="t" style="left:-340.5px;width:600px;text-align:right;top:216.05px;font-size:14px;line-height:14px;font-weight:normal;color:#000;">6</div>
<div class="t" style="left:479px;top:216.05px;font-size:14px;line-height:14px;font-weight:normal;color:#000;">Model</div>
<div class="t" style="left:-14px;width:600px;text-align:right;top:216.05px;font-size:14px;line-height:14px;font-weight:normal;color:#000;">7</div>
<div class="t" style="left:102px;width:600px;text-align:right;top:216.05px;font-size:14px;line-height:14px;font-weight:normal;color:#000;">13690.401</div>
<div class="t" style="left:201px;width:600px;text-align:right;top:216.05px;font-size:14px;line-height:14px;font-weight:normal;color:#000;">1955.77</div>
<div class="t" style="left:262px;width:600px;text-align:right;top:216.05px;font-size:14px;line-height:14px;font-weight:normal;color:#000;">11.3099</div>
<div class="t" style="left:329px;width:600px;text-align:right;top:216.05px;font-size:14px;line-height:14px;font-weight:normal;color:#000;">&lt;.0001</div>
<div class="t" style="left:-340.5px;width:600px;text-align:right;top:237.05px;font-size:14px;line-height:14px;font-weight:normal;color:#000;">7</div>
<div class="t" style="left:479px;top:237.05px;font-size:14px;line-height:14px;font-weight:normal;color:#000;">Error</div>
<div class="t" style="left:-14px;width:600px;text-align:right;top:237.05px;font-size:14px;line-height:14px;font-weight:normal;color:#000;">32</div>
<div class="t" style="left:102px;width:600px;text-align:right;top:237.05px;font-size:14px;line-height:14px;font-weight:normal;color:#000;">5533.599</div>
<div class="t" style="left:201px;width:600px;text-align:right;top:237.05px;font-size:14px;line-height:14px;font-weight:normal;color:#000;">172.92</div>
<div class="t" style="left:-340.5px;width:600px;text-align:right;top:258.05px;font-size:14px;line-height:14px;font-weight:normal;color:#000;">8</div>
<div class="t" style="left:479px;top:258.05px;font-size:14px;line-height:14px;font-weight:normal;color:#000;">C. Total</div>
<div class="t" style="left:-14px;width:600px;text-align:right;top:258.05px;font-size:14px;line-height:14px;font-weight:normal;color:#000;">39</div>
<div class="t" style="left:102px;width:600px;text-align:right;top:258.05px;font-size:14px;line-height:14px;font-weight:normal;color:#000;">19224.000</div>
<div class="t" style="left:-340.5px;width:600px;text-align:right;top:279.05px;font-size:14px;line-height:14px;font-weight:normal;color:#000;">9</div>
<div class="t" style="left:937px;top:279.05px;font-size:14px;line-height:14px;font-weight:normal;color:#000;">Intercept</div>
<div class="t" style="left:525px;width:600px;text-align:right;top:279.05px;font-size:14px;line-height:14px;font-weight:normal;color:#000;">119.38670884</div>
<div class="t" style="left:625px;width:600px;text-align:right;top:279.05px;font-size:14px;line-height:14px;font-weight:normal;color:#000;">5.5302001784</div>
<div class="t" style="left:683px;width:600px;text-align:right;top:279.05px;font-size:14px;line-height:14px;font-weight:normal;color:#000;">21.59</div>
<div class="t" style="left:744px;width:600px;text-align:right;top:279.05px;font-size:14px;line-height:14px;font-weight:normal;color:#000;">&lt;.0001</div>
<div class="t" style="left:-340.5px;width:600px;text-align:right;top:300.05px;font-size:14px;line-height:14px;font-weight:normal;color:#000;">10</div>
<div class="t" style="left:937px;top:300.05px;font-size:14px;line-height:14px;font-weight:normal;color:#000;">age[13-12]</div>
<div class="t" style="left:525px;width:600px;text-align:right;top:300.05px;font-size:14px;line-height:14px;font-weight:normal;color:#000;">-13.68559317</div>
<div class="t" style="left:625px;width:600px;text-align:right;top:300.05px;font-size:14px;line-height:14px;font-weight:normal;color:#000;">6.9665923767</div>
<div class="t" style="left:683px;width:600px;text-align:right;top:300.05px;font-size:14px;line-height:14px;font-weight:normal;color:#000;">-1.96</div>
<div class="t" style="left:744px;width:600px;text-align:right;top:300.05px;font-size:14px;line-height:14px;font-weight:normal;color:#000;">0.0582</div>
<div class="t" style="left:-340.5px;width:600px;text-align:right;top:321.05px;font-size:14px;line-height:14px;font-weight:normal;color:#000;">11</div>
<div class="t" style="left:937px;top:321.05px;font-size:14px;line-height:14px;font-weight:normal;color:#000;">age[14-13]</div>
<div class="t" style="left:525px;width:600px;text-align:right;top:321.05px;font-size:14px;line-height:14px;font-weight:normal;color:#000;">-12.16166791</div>
<div class="t" style="left:625px;width:600px;text-align:right;top:321.05px;font-size:14px;line-height:14px;font-weight:normal;color:#000;">6.8278582571</div>
<div class="t" style="left:683px;width:600px;text-align:right;top:321.05px;font-size:14px;line-height:14px;font-weight:normal;color:#000;">-1.78</div>
<div class="t" style="left:744px;width:600px;text-align:right;top:321.05px;font-size:14px;line-height:14px;font-weight:normal;color:#000;">0.0844</div>
<div class="t" style="left:-340.5px;width:600px;text-align:right;top:342.05px;font-size:14px;line-height:14px;font-weight:normal;color:#000;">12</div>
<div class="t" style="left:937px;top:342.05px;font-size:14px;line-height:14px;font-weight:normal;color:#000;">age[15-14]</div>
<div class="t" style="left:525px;width:600px;text-align:right;top:342.05px;font-size:14px;line-height:14px;font-weight:normal;color:#000;">6.0774117077</div>
<div class="t" style="left:625px;width:600px;text-align:right;top:342.05px;font-size:14px;line-height:14px;font-weight:normal;color:#000;">6.2801408944</div>
<div class="t" style="left:683px;width:600px;text-align:right;top:342.05px;font-size:14px;line-height:14px;font-weight:normal;color:#000;">0.97</div>
<div class="t" style="left:744px;width:600px;text-align:right;top:342.05px;font-size:14px;line-height:14px;font-weight:normal;color:#000;">0.3404</div>
<div class="t" style="left:-340.5px;width:600px;text-align:right;top:363.05px;font-size:14px;line-height:14px;font-weight:normal;color:#000;">13</div>
<div class="t" style="left:937px;top:363.05px;font-size:14px;line-height:14px;font-weight:normal;color:#000;">age[16-15]</div>
<div class="t" style="left:525px;width:600px;text-align:right;top:363.05px;font-size:14px;line-height:14px;font-weight:normal;color:#000;">9.6108281407</div>
<div class="t" style="left:625px;width:600px;text-align:right;top:363.05px;font-size:14px;line-height:14px;font-weight:normal;color:#000;">9.2328237841</div>
<div class="t" style="left:683px;width:600px;text-align:right;top:363.05px;font-size:14px;line-height:14px;font-weight:normal;color:#000;">1.04</div>
<div class="t" style="left:744px;width:600px;text-align:right;top:363.05px;font-size:14px;line-height:14px;font-weight:normal;color:#000;">0.3057</div>
<div class="t" style="left:-340.5px;width:600px;text-align:right;top:384.05px;font-size:14px;line-height:14px;font-weight:normal;color:#000;">14</div>
<div class="t" style="left:937px;top:384.05px;font-size:14px;line-height:14px;font-weight:normal;color:#000;">age[17-16]</div>
<div class="t" style="left:525px;width:600px;text-align:right;top:384.05px;font-size:14px;line-height:14px;font-weight:normal;color:#000;">12.679277369</div>
<div class="t" style="left:625px;width:600px;text-align:right;top:384.05px;font-size:14px;line-height:14px;font-weight:normal;color:#000;">10.891565602</div>
<div class="t" style="left:683px;width:600px;text-align:right;top:384.05px;font-size:14px;line-height:14px;font-weight:normal;color:#000;">1.16</div>
<div class="t" style="left:744px;width:600px;text-align:right;top:384.05px;font-size:14px;line-height:14px;font-weight:normal;color:#000;">0.2530</div>
<div class="t" style="left:-340.5px;width:600px;text-align:right;top:405.05px;font-size:14px;line-height:14px;font-weight:normal;color:#000;">15</div>
<div class="t" style="left:937px;top:405.05px;font-size:14px;line-height:14px;font-weight:normal;color:#000;">height</div>
<div class="t" style="left:525px;width:600px;text-align:right;top:405.05px;font-size:14px;line-height:14px;font-weight:normal;color:#000;">44.867932273</div>
<div class="t" style="left:625px;width:600px;text-align:right;top:405.05px;font-size:14px;line-height:14px;font-weight:normal;color:#000;">6.7515331137</div>
<div class="t" style="left:683px;width:600px;text-align:right;top:405.05px;font-size:14px;line-height:14px;font-weight:normal;color:#000;">6.65</div>
<div class="t" style="left:744px;width:600px;text-align:right;top:405.05px;font-size:14px;line-height:14px;font-weight:normal;color:#000;">&lt;.0001</div>
<div class="t" style="left:-340.5px;width:600px;text-align:right;top:426.05px;font-size:14px;line-height:14px;font-weight:normal;color:#000;">16</div>
<div class="t" style="left:937px;top:426.05px;font-size:14px;line-height:14px;font-weight:normal;color:#000;">sex[F]</div>
<div class="t" style="left:525px;width:600px;text-align:right;top:426.05px;font-size:14px;line-height:14px;font-weight:normal;color:#000;">2.04920689</div>
<div class="t" style="left:625px;width:600px;text-align:right;top:426.05px;font-size:14px;line-height:14px;font-weight:normal;color:#000;">2.3022045309</div>
<div class="t" style="left:683px;width:600px;text-align:right;top:426.05px;font-size:14px;line-height:14px;font-weight:normal;color:#000;">0.89</div>
<div class="t" style="left:744px;width:600px;text-align:right;top:426.05px;font-size:14px;line-height:14px;font-weight:normal;color:#000;">0.3801</div>
<div class="t" style="left:-340.5px;width:600px;text-align:right;top:447.05px;font-size:14px;line-height:14px;font-weight:normal;color:#000;">17</div>
<div class="t" style="left:937px;top:447.05px;font-size:14px;line-height:14px;font-weight:normal;color:#000;">sex[M]</div>
<div class="t" style="left:525px;width:600px;text-align:right;top:447.05px;font-size:14px;line-height:14px;font-weight:normal;color:#000;">-2.04920689</div>
<div class="t" style="left:625px;width:600px;text-align:right;top:447.05px;font-size:14px;line-height:14px;font-weight:normal;color:#000;">2.3022045309</div>
<div class="t" style="left:683px;width:600px;text-align:right;top:447.05px;font-size:14px;line-height:14px;font-weight:normal;color:#000;">-0.89</div>
<div class="t" style="left:744px;width:600px;text-align:right;top:447.05px;font-size:14px;line-height:14px;font-weight:normal;color:#000;">0.3801</div>
<svg class="r" style="left:0;top:0" width="1404" height="519"><circle cx="586" cy="117" r="2.1" fill="#000"/><circle cx="702" cy="117" r="2.1" fill="#000"/><circle cx="801" cy="117" r="2.1" fill="#000"/><circle cx="862" cy="117" r="2.1" fill="#000"/><circle cx="929" cy="117" r="2.1" fill="#000"/><circle cx="1125" cy="117" r="2.1" fill="#000"/><circle cx="1225" cy="117" r="2.1" fill="#000"/><circle cx="1283" cy="117" r="2.1" fill="#000"/><circle cx="1344" cy="117" r="2.1" fill="#000"/><circle cx="586" cy="138" r="2.1" fill="#000"/><circle cx="702" cy="138" r="2.1" fill="#000"/><circle cx="801" cy="138" r="2.1" fill="#000"/><circle cx="862" cy="138" r="2.1" fill="#000"/><circle cx="929" cy="138" r="2.1" fill="#000"/><circle cx="1125" cy="138" r="2.1" fill="#000"/><circle cx="1225" cy="138" r="2.1" fill="#000"/><circle cx="1283" cy="138" r="2.1" fill="#000"/><circle cx="1344" cy="138" r="2.1" fill="#000"/><circle cx="586" cy="159" r="2.1" fill="#000"/><circle cx="702" cy="159" r="2.1" fill="#000"/><circle cx="801" cy="159" r="2.1" fill="#000"/><circle cx="862" cy="159" r="2.1" fill="#000"/><circle cx="929" cy="159" r="2.1" fill="#000"/><circle cx="1125" cy="159" r="2.1" fill="#000"/><circle cx="1225" cy="159" r="2.1" fill="#000"/><circle cx="1283" cy="159" r="2.1" fill="#000"/><circle cx="1344" cy="159" r="2.1" fill="#000"/><circle cx="586" cy="180" r="2.1" fill="#000"/><circle cx="702" cy="180" r="2.1" fill="#000"/><circle cx="801" cy="180" r="2.1" fill="#000"/><circle cx="862" cy="180" r="2.1" fill="#000"/><circle cx="929" cy="180" r="2.1" fill="#000"/><circle cx="1125" cy="180" r="2.1" fill="#000"/><circle cx="1225" cy="180" r="2.1" fill="#000"/><circle cx="1283" cy="180" r="2.1" fill="#000"/><circle cx="1344" cy="180" r="2.1" fill="#000"/><circle cx="586" cy="201" r="2.1" fill="#000"/><circle cx="702" cy="201" r="2.1" fill="#000"/><circle cx="801" cy="201" r="2.1" fill="#000"/><circle cx="862" cy="201" r="2.1" fill="#000"/><circle cx="929" cy="201" r="2.1" fill="#000"/><circle cx="1125" cy="201" r="2.1" fill="#000"/><circle cx="1225" cy="201" r="2.1" fill="#000"/><circle cx="1283" cy="201" r="2.1" fill="#000"/><circle cx="1344" cy="201" r="2.1" fill="#000"/><circle cx="471" cy="222" r="2.1" fill="#000"/><circle cx="1125" cy="222" r="2.1" fill="#000"/><circle cx="1225" cy="222" r="2.1" fill="#000"/><circle cx="1283" cy="222" r="2.1" fill="#000"/><circle cx="1344" cy="222" r="2.1" fill="#000"/><circle cx="471" cy="243" r="2.1" fill="#000"/><circle cx="862" cy="243" r="2.1" fill="#000"/><circle cx="929" cy="243" r="2.1" fill="#000"/><circle cx="1125" cy="243" r="2.1" fill="#000"/><circle cx="1225" cy="243" r="2.1" fill="#000"/><circle cx="1283" cy="243" r="2.1" fill="#000"/><circle cx="1344" cy="243" r="2.1" fill="#000"/><circle cx="471" cy="264" r="2.1" fill="#000"/><circle cx="801" cy="264" r="2.1" fill="#000"/><circle cx="862" cy="264" r="2.1" fill="#000"/><circle cx="929" cy="264" r="2.1" fill="#000"/><circle cx="1125" cy="264" r="2.1" fill="#000"/><circle cx="1225" cy="264" r="2.1" fill="#000"/><circle cx="1283" cy="264" r="2.1" fill="#000"/><circle cx="1344" cy="264" r="2.1" fill="#000"/><circle cx="586" cy="285" r="2.1" fill="#000"/><circle cx="702" cy="285" r="2.1" fill="#000"/><circle cx="801" cy="285" r="2.1" fill="#000"/><circle cx="862" cy="285" r="2.1" fill="#000"/><circle cx="929" cy="285" r="2.1" fill="#000"/><circle cx="471" cy="306" r="2.1" fill="#000"/><circle cx="586" cy="306" r="2.1" fill="#000"/><circle cx="702" cy="306" r="2.1" fill="#000"/><circle cx="801" cy="306" r="2.1" fill="#000"/><circle cx="862" cy="306" r="2.1" fill="#000"/><circle cx="929" cy="306" r="2.1" fill="#000"/><circle cx="471" cy="327" r="2.1" fill="#000"/><circle cx="586" cy="327" r="2.1" fill="#000"/><circle cx="702" cy="327" r="2.1" fill="#000"/><circle cx="801" cy="327" r="2.1" fill="#000"/><circle cx="862" cy="327" r="2.1" fill="#000"/><circle cx="929" cy="327" r="2.1" fill="#000"/><circle cx="471" cy="348" r="2.1" fill="#000"/><circle cx="586" cy="348" r="2.1" fill="#000"/><circle cx="702" cy="348" r="2.1" fill="#000"/><circle cx="801" cy="348" r="2.1" fill="#000"/><circle cx="862" cy="348" r="2.1" fill="#000"/><circle cx="929" cy="348" r="2.1" fill="#000"/><circle cx="471" cy="369" r="2.1" fill="#000"/><circle cx="586" cy="369" r="2.1" fill="#000"/><circle cx="702" cy="369" r="2.1" fill="#000"/><circle cx="801" cy="369" r="2.1" fill="#000"/><circle cx="862" cy="369" r="2.1" fill="#000"/><circle cx="929" cy="369" r="2.1" fill="#000"/><circle cx="471" cy="390" r="2.1" fill="#000"/><circle cx="586" cy="390" r="2.1" fill="#000"/><circle cx="702" cy="390" r="2.1" fill="#000"/><circle cx="801" cy="390" r="2.1" fill="#000"/><circle cx="862" cy="390" r="2.1" fill="#000"/><circle cx="929" cy="390" r="2.1" fill="#000"/><circle cx="471" cy="411" r="2.1" fill="#000"/><circle cx="586" cy="411" r="2.1" fill="#000"/><circle cx="702" cy="411" r="2.1" fill="#000"/><circle cx="801" cy="411" r="2.1" fill="#000"/><circle cx="862" cy="411" r="2.1" fill="#000"/><circle cx="929" cy="411" r="2.1" fill="#000"/><circle cx="471" cy="432" r="2.1" fill="#000"/><circle cx="586" cy="432" r="2.1" fill="#000"/><circle cx="702" cy="432" r="2.1" fill="#000"/><circle cx="801" cy="432" r="2.1" fill="#000"/><circle cx="862" cy="432" r="2.1" fill="#000"/><circle cx="929" cy="432" r="2.1" fill="#000"/><circle cx="471" cy="453" r="2.1" fill="#000"/><circle cx="586" cy="453" r="2.1" fill="#000"/><circle cx="702" cy="453" r="2.1" fill="#000"/><circle cx="801" cy="453" r="2.1" fill="#000"/><circle cx="862" cy="453" r="2.1" fill="#000"/><circle cx="929" cy="453" r="2.1" fill="#000"/></svg>
<svg class="r" style="left:466px;top:274px" width="22" height="20" viewBox="0 0 22 20">
<g transform="translate(11,10)">
<path d="M-1.9 -7.8 H1.9 V-3.6 L2.9 -3.6 L2.9 -4.8 L8.4 0 L2.9 4.8 L2.9 3.6 L1.9 3.6 V7.8 H-1.9 V3.6 L-2.9 3.6 L-2.9 4.8 L-8.4 0 L-2.9 -4.8 L-2.9 -3.6 L-1.9 -3.6 Z" fill="#fff" stroke="#fff" stroke-width="1.6" stroke-linejoin="round" style="filter:drop-shadow(0 0.6px 0.8px rgba(0,0,0,0.45))"/>
<path d="M-1.3 -6.8 H1.3 V6.8 H-1.3 Z" fill="#000"/>
<path d="M-7.3 0 L-3.3 -3.6 V-1 H3.3 V-3.6 L7.3 0 L3.3 3.6 V1 H-3.3 V3.6 Z" fill="#000"/>
</g>
</svg>
<div class="r" style="left:0px;top:0px;width:1px;height:1px;background:#000;"></div>
<div class="r" style="left:1403px;top:0px;width:1px;height:1px;background:#000;"></div>
<div class="r" style="left:0px;top:518px;width:1px;height:1px;background:#000;"></div>
<div class="r" style="left:1403px;top:518px;width:1px;height:1px;background:#000;"></div>
</body></html>
